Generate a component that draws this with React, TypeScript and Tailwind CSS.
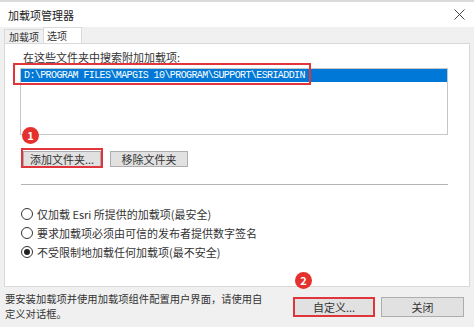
import React from "react";

const F = "[font-family:'Noto_Sans_CJK_SC','Noto_Sans',sans-serif]";

function Radio({ checked, label }: { checked?: boolean; label: string }) {
  return (
    <div className="flex h-[19px] items-center pl-[16px]">
      <div className="flex h-[12px] w-[12px] items-center justify-center rounded-full border border-[#333] bg-white">
        {checked && <div className="h-[6px] w-[6px] rounded-full bg-[#222]" />}
      </div>
      <span className="ml-[4px] text-[11px] leading-[14px] text-[#333]">{label}</span>
    </div>
  );
}

function Badge({ n, className }: { n: string; className: string }) {
  return (
    <div
      className={`absolute flex h-[17px] w-[17px] items-center justify-center rounded-full bg-[#e5312d] text-[11px] font-bold leading-none text-white ${className}`}
    >
      {n}
    </div>
  );
}

export default function App() {
  return (
    <div className={`relative flex h-[327px] w-[474px] flex-col overflow-hidden bg-[#f0f0f0] ${F}`}>
      {/* title bar */}
      <div className="flex h-[27px] items-center justify-between border-t-[2px] border-[#dadada] bg-white pl-[8px] pr-[9px]">
        <span className="text-[11px] leading-[14px] text-[#222]">加载项管理器</span>
        <svg width="11" height="11" viewBox="0 0 11 11">
          <path d="M0.5 0.5 L10.5 10.5 M10.5 0.5 L0.5 10.5" stroke="#444" strokeWidth="1" />
        </svg>
      </div>

      {/* tabs */}
      <div className="flex h-[16px] items-end pl-[4px]">
        <div className="flex h-[14px] w-[39px] items-center justify-center border-l border-t border-[#d9d9d9] bg-[#f0f0f0] text-[10px] leading-[12px] text-[#333]">
          加载项
        </div>
        <div className="relative -mb-px flex h-[17px] w-[39px] items-center border-x border-t border-[#d9d9d9] bg-white pl-[3px] text-[10px] leading-[12px] text-[#333]">
          选项
        </div>
      </div>

      {/* panel */}
      <div className="relative mx-[4px] h-[244px] border border-[#d9d9d9] bg-white">
        <div className="pl-[18px] pt-[6px] text-[11px] leading-[14px] text-[#333]">
          在这些文件夹中搜索附加加载项:
        </div>
        <div className="ml-[15px] mt-[4px] h-[67px] w-[428px] border border-[#c6c6c6] bg-white p-0">
          <div className="flex h-[13px] items-center bg-[#0078d7] pl-[3px] font-['Liberation_Mono',monospace] text-[10px] leading-[13px] tracking-[-0.6px] text-white">
            D:\PROGRAM FILES\MAPGIS 10\PROGRAM\SUPPORT\ESRIADDIN
          </div>
        </div>

        <div className="ml-[18px] mt-[16px] flex gap-[9px]">
          <div className="flex h-[16px] w-[78px] items-center justify-center border border-[#adadad] bg-[#e1e1e1] text-[11px] leading-[14px] text-[#333]">
            添加文件夹...
          </div>
          <div className="flex h-[16px] w-[78px] items-center justify-center border border-[#adadad] bg-[#e1e1e1] text-[11px] leading-[14px] text-[#333]">
            移除文件夹
          </div>
        </div>

        <div className="ml-[16px] mt-[17px] h-px w-[427px] bg-[#b4b4b4]" />

        <div className="mt-[19px] flex flex-col">
          <Radio label="仅加载 Esri 所提供的加载项(最安全)" />
          <Radio label="要求加载项必须由可信的发布者提供数字签名" />
          <Radio checked label="不受限制地加载任何加载项(最不安全)" />
        </div>

        {/* annotations */}
        <div className="absolute left-[8px] top-[19px] h-[22px] w-[298px] border-2 border-[#e0353a]" />
        <div className="absolute left-[16px] top-[104px] h-[20px] w-[82px] border-2 border-[#e0353a]" />
        <Badge n="1" className="left-[17px] top-[83px]" />
      </div>

      {/* bottom */}
      <div className="flex flex-1 items-start justify-between pl-[5px] pr-[10px]">
        <div className="flex shrink-0 flex-col pt-[4px] text-[10.3px] leading-[15px] text-[#333]">
          <span className="whitespace-nowrap">要安装加载项并使用加载项组件配置用户界面，请使用自</span>
          <span className="whitespace-nowrap">定义对话框。</span>
        </div>
        <div className="mt-[10px] flex gap-[6px]">
          <div className="relative flex h-[20px] w-[82px] items-center justify-center border border-[#adadad] bg-[#e1e1e1] text-[11px] leading-[14px] text-[#333]">
            自定义...
            <div className="absolute -inset-px border-2 border-[#e0353a]" />
          </div>
          <div className="flex h-[20px] w-[83px] items-center justify-center border border-[#adadad] bg-[#e1e1e1] text-[11px] leading-[14px] text-[#333]">
            关闭
          </div>
        </div>
      </div>
      <Badge n="2" className="left-[295px] top-[272px]" />
    </div>
  );
}
